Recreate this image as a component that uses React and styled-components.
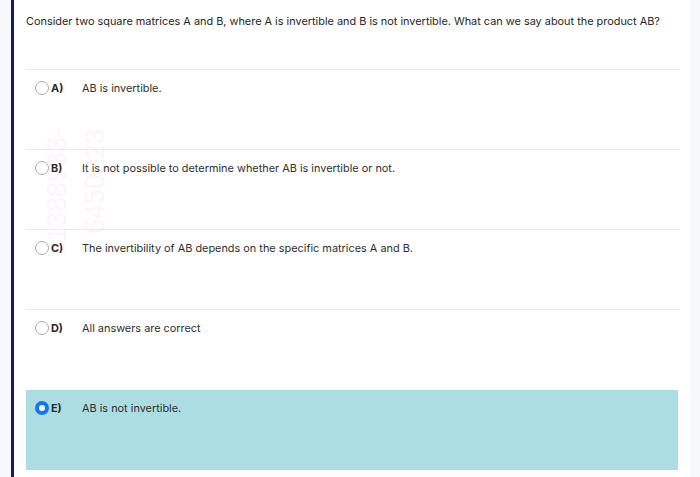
import React from "react";
import styled, { createGlobalStyle } from "styled-components";

const Global = createGlobalStyle`
  html, body { margin: 0; padding: 0; background: #f7f8f9; }
  body { font-family: Inter, "Liberation Sans", Arial, sans-serif; }
  * { box-sizing: border-box; }
`;

const Page = styled.div`
  display: flex;
  height: 477px;
  padding-left: 11px;
  background: #f7f8f9;
  overflow: hidden;
`;

const Panel = styled.main`
  position: relative;
  width: 679px;
  height: 477px;
  background: #ffffff;
  border-left: 3px solid #14147a;
  padding: 14px 10px 0 11px;
`;

const Question = styled.p`
  margin: 0 0 0 1px;
  font-size: 10.9px;
  line-height: 14px;
  color: #262626;
`;

const List = styled.div`
  margin-top: 41px;
  display: flex;
  flex-direction: column;
`;

const Row = styled.div`
  height: 80px;
  border-top: ${(p) => (p.$selected ? "none" : "1px solid #ececec")};
  background: ${(p) => (p.$selected ? "#acdde3" : "transparent")};
  margin: ${(p) => (p.$selected ? "1px 2px 0 1px" : "0")};
  display: flex;
  align-items: flex-start;
  padding: ${(p) => (p.$selected ? "11px 0 0 9px" : "11px 0 0 10px")};
`;

const Radio = styled.span`
  width: 14px;
  height: 14px;
  border-radius: 50%;
  flex: none;
  border: ${(p) => (p.$checked ? "4px solid #1877e6" : "1px solid #a8a8a8")};
  background: #fff;
`;

const Letter = styled.span`
  width: 33px;
  padding-left: 2px;
  font-size: 10.9px;
  font-weight: 700;
  line-height: 14px;
  color: #2a2a2a;
`;

const Text = styled.span`
  font-size: 10.9px;
  line-height: 14px;
  color: #2f2f2f;
`;

const Watermark = styled.div`
  position: absolute;
  left: ${(p) => p.$x}px;
  top: ${(p) => p.$y}px;
  transform: rotate(-90deg);
  transform-origin: left top;
  font-size: 27px;
  color: rgba(230, 170, 230, 0.14);
  white-space: nowrap;
  pointer-events: none;
  font-family: "Liberation Sans", Arial, sans-serif;
`;

const options = [
  ["A)", "AB is invertible."],
  ["B)", "It is not possible to determine whether AB is invertible or not."],
  ["C)", "The invertibility of AB depends on the specific matrices A and B."],
  ["D)", "All answers are correct"],
  ["E)", "AB is not invertible."],
];

export default function App() {
  return (
    <>
      <Global />
      <Page>
        <Panel>
          <Question>
            Consider two square matrices A and B, where A is invertible and B is not invertible. What can we say about the product AB?
          </Question>
          <List>
            {options.map(([l, t], i) => (
              <Row key={l} $selected={i === 4}>
                <Radio $checked={i === 4} />
                <Letter>{l}</Letter>
                <Text>{t}</Text>
              </Row>
            ))}
          </List>
          <Watermark $x={28} $y={242}>1388933-</Watermark>
          <Watermark $x={66} $y={234}>6450223</Watermark>
        </Panel>
      </Page>
    </>
  );
}
